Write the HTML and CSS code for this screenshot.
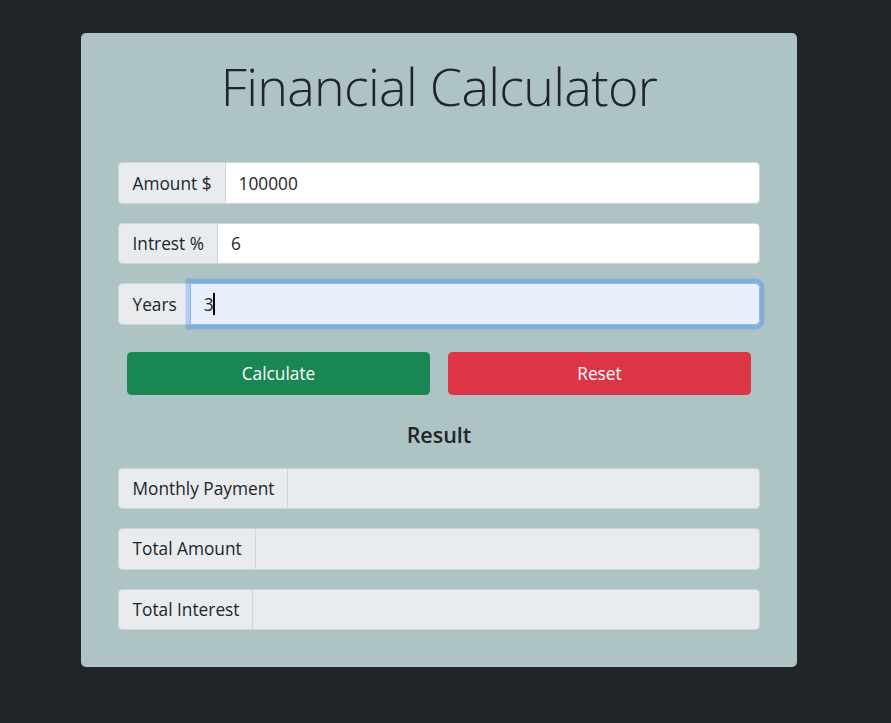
FILE: index.html
```html
<!DOCTYPE html>
<html lang="en">
<head>
<meta charset="utf-8">
<title>Financial Calculator</title>
<link rel="stylesheet" href="styles.css">
</head>
<body>
<main class="card">
  <h1 class="title">Financial Calculator</h1>
  <form class="form">
    <div class="group">
      <span class="addon">Amount $</span>
      <input class="field" type="text" value="100000">
    </div>
    <div class="group">
      <span class="addon">Intrest %</span>
      <input class="field" type="text" value="6">
    </div>
    <div class="group">
      <span class="addon">Years</span>
      <div class="field-wrap">
        <input class="field focus" type="text" value="3">
        <span class="caret"></span>
      </div>
    </div>
  </form>
  <div class="actions">
    <button class="btn btn-green" type="button">Calculate</button>
    <button class="btn btn-red" type="button">Reset</button>
  </div>
  <h4 class="result-title">Result</h4>
  <div class="form results">
    <div class="group">
      <span class="addon">Monthly Payment</span>
      <input class="field disabled" type="text" disabled>
    </div>
    <div class="group">
      <span class="addon">Total Amount</span>
      <input class="field disabled" type="text" disabled>
    </div>
    <div class="group">
      <span class="addon">Total Interest</span>
      <input class="field disabled" type="text" disabled>
    </div>
  </div>
</main>
</body>
</html>
```

FILE: styles.css
```css
* { box-sizing: border-box; }
html, body { margin: 0; }
body {
  background: #212529;
  font-family: "Open Sans", "Noto Sans", sans-serif;
  color: #212529;
  padding-top: 33px;
  min-height: 723px;
}
.card {
  width: 716px;
  margin-left: 81px;
  background: #aec3c4;
  border-radius: 5px;
  padding: 18.8px 37px 36.5px;
}
.title {
  margin: 0;
  text-align: center;
  font-weight: 300;
  font-size: 52px;
  letter-spacing: -0.7px;
  line-height: 68px;
}
.form {
  margin-top: 42.5px;
  display: flex;
  flex-direction: column;
  gap: 19px;
}
.group {
  display: flex;
  height: 41.5px;
}
.addon {
  display: flex;
  align-items: center;
  padding: 0 13px 0 13.5px;
  background: #e9ecef;
  border: 1px solid #ced4da;
  border-radius: 4.4px 0 0 4.4px;
  font-size: 17.3px;
  white-space: nowrap;
}
.field {
  flex: 1;
  min-width: 0;
  height: 100%;
  margin: 0 0 0 -1px;
  border: 1px solid #ced4da;
  border-radius: 0 4.4px 4.4px 0;
  padding: 0 13px;
  font-family: inherit;
  font-size: 17.3px;
  color: #212529;
  background: #fff;
  outline: none;
}
.field-wrap {
  flex: 1;
  display: flex;
  position: relative;
  z-index: 1;
}
.field.focus {
  background: #e8f0fe;
  border-color: #86b7fe;
  box-shadow: 0 0 0 4.4px rgba(13, 110, 253, .25);
}
.field.disabled {
  background: #e9ecef;
}
.caret {
  position: absolute;
  left: 22px;
  top: 9.5px;
  width: 2px;
  height: 22.5px;
  background: #000;
}
.actions {
  margin-top: 27.2px;
  display: flex;
  gap: 18px;
  padding: 0 9px;
}
.btn {
  flex: 1;
  height: 43px;
  border: 1px solid transparent;
  border-radius: 4.4px;
  color: #fff;
  font-family: inherit;
  font-size: 17.3px;
}
.btn-green { background: #198754; border-color: #198754; }
.btn-red { background: #dc3545; border-color: #dc3545; }
.result-title {
  margin: 26.1px 0 0;
  text-align: center;
  font-size: 21.5px;
  font-weight: 600;
  line-height: 28px;
}
.results {
  margin-top: 18.6px;
}
```
